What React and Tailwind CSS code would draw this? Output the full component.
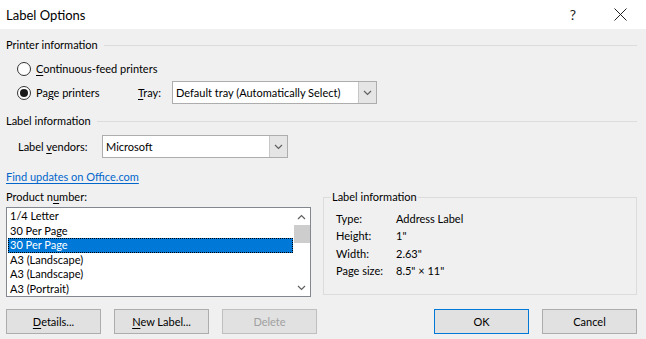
import React from "react";

const font = { fontFamily: 'Lato, "Segoe UI", sans-serif' };

function Chevron({ up = false, className = "" }) {
  return (
    <svg className={className} width="9" height="6" viewBox="0 0 9 6" fill="none" stroke="currentColor" strokeWidth="1.2">
      {up ? <path d="M1 5l3.5-3.5L8 5" /> : <path d="M1 1l3.5 3.5L8 1" />}
    </svg>
  );
}

function Dropdown({ value, width }) {
  return (
    <div className={`flex h-[23px] border border-[#adadad] bg-white ${width}`}>
      <div className="flex-1 flex items-center pl-[3px] text-black whitespace-nowrap overflow-hidden">{value}</div>
      <div className="w-[18px] flex items-center justify-center bg-[#e5e5e5] border-l border-[#c7c7c7] text-[#606060]">
        <Chevron />
      </div>
    </div>
  );
}

function Radio({ checked }) {
  return (
    <span className="w-[14px] h-[14px] shrink-0 rounded-full border border-[#333] bg-white flex items-center justify-center">
      {checked && <span className="w-[8px] h-[8px] rounded-full bg-[#1a1a1a]" />}
    </span>
  );
}

function SectionHeader({ children }) {
  return (
    <div className="flex items-center h-[16px] gap-[6px] pr-[9px]">
      <span>{children}</span>
      <span className="flex-1 h-px bg-[#dcdcdc]" />
    </div>
  );
}

function Button({ children, primary, disabled }) {
  return (
    <button
      className={`w-[95px] h-[25px] flex items-center justify-center bg-[#e1e1e1] border ${
        primary ? "border-[#0078d7]" : disabled ? "border-[#bfbfbf]" : "border-[#adadad]"
      } ${disabled ? "text-[#a0a0a0]" : "text-black"}`}
    >
      {children}
    </button>
  );
}

const products = ["1/4 Letter", "30 Per Page", "30 Per Page", "A3 (Landscape)", "A3 (Landscape)", "A3 (Portrait)"];

const info = [
  ["Type:", "Address Label"],
  ["Height:", '1"'],
  ["Width:", '2.63"'],
  ["Page size:", '8.5" × 11"'],
];

export default function App() {
  return (
    <div className="w-[646px] h-[339px] bg-[#f0f0f0] text-[11px] leading-[16px] text-black overflow-hidden" style={font}>
      {/* Title bar */}
      <div className="h-[29px] bg-white flex items-center pl-[6px]">
        <span className="flex-1 text-[13px]">Label Options</span>
        <span className="w-[20px] text-center text-[14px] text-[#222] mr-[31px]">?</span>
        <svg className="mr-[19px]" width="13" height="13" viewBox="0 0 13 13" stroke="#222" strokeWidth="1">
          <path d="M0.5 0.5l12 12M12.5 0.5l-12 12" />
        </svg>
      </div>

      <div className="pl-[6px]">
        <div className="mt-[8px]">
          <SectionHeader>Printer information</SectionHeader>
        </div>

        <div className="mt-[6px] h-[20px] flex items-center pl-[11px] gap-[5px]">
          <Radio />
          <span>
            <u className="underline-offset-2">C</u>ontinuous-feed printers
          </span>
        </div>

        <div className="mt-[2px] h-[23px] flex items-center pl-[11px]">
          <Radio checked />
          <span className="ml-[5px] w-[102px]">
            Pa<u className="underline-offset-2">g</u>e printers
          </span>
          <span className="w-[34px]">
            <u className="underline-offset-2">T</u>ray:
          </span>
          <Dropdown value="Default tray (Automatically Select)" width="w-[205px]" />
        </div>

        <div className="mt-[9px]">
          <SectionHeader>Label information</SectionHeader>
        </div>

        <div className="mt-[6px] h-[23px] flex items-center pl-[12px]">
          <span className="w-[84px]">
            Label <u className="underline-offset-2">v</u>endors:
          </span>
          <Dropdown value="Microsoft" width="w-[186px]" />
        </div>

        <div className="mt-[11px] h-[16px] flex items-center">
          <span className="text-[#0066cc] underline underline-offset-2">Find updates on Office.com</span>
        </div>

        <div className="mt-[4px] flex gap-[12px] items-start">
          {/* Product list */}
          <div className="w-[305px]">
            <div className="h-[16px] flex items-center">
              Product n<u className="underline-offset-2">u</u>mber:
            </div>
            <div className="mt-[2px] h-[90px] border border-[#828790] bg-white flex">
              <div className="flex-1 pl-[1px] pt-[1px]">
                {products.map((p, i) => (
                  <div
                    key={i}
                    className={`h-[14.5px] leading-[14px] flex items-center pl-[2px] ${
                      i === 2 ? "bg-[#0078d7] text-white outline outline-1 outline-dotted outline-[#000] -outline-offset-1" : ""
                    }`}
                  >
                    {p}
                  </div>
                ))}
              </div>
              <div className="w-[17px] flex flex-col items-center bg-white text-[#606060]">
                <div className="h-[17px] flex items-center justify-center">
                  <Chevron up />
                </div>
                <div className="w-[16px] h-[18px] bg-[#cdcdcd]" />
                <div className="flex-1" />
                <div className="h-[17px] flex items-center justify-center">
                  <Chevron />
                </div>
              </div>
            </div>
          </div>

          {/* Label information group */}
          <fieldset className="w-[314px] border border-[#dcdcdc] pl-[12px] pr-[8px] pt-[5px] pb-[14px] m-0">
            <legend className="px-[1px] ml-[-5px] leading-[16px]">Label information</legend>
            {info.map(([k, v]) => (
              <div key={k} className="h-[17.5px] flex items-center">
                <span className="w-[60px]">{k}</span>
                <span>{v}</span>
              </div>
            ))}
          </fieldset>
        </div>

        <div className="mt-[12px] flex gap-[13px] pr-[9px]">
          <Button>
            <span>
              <u className="underline-offset-2">D</u>etails...
            </span>
          </Button>
          <Button>
            <span>
              <u className="underline-offset-2">N</u>ew Label...
            </span>
          </Button>
          <Button disabled>Delete</Button>
          <div className="flex-1" />
          <Button primary>OK</Button>
          <Button>Cancel</Button>
        </div>
      </div>
    </div>
  );
}
